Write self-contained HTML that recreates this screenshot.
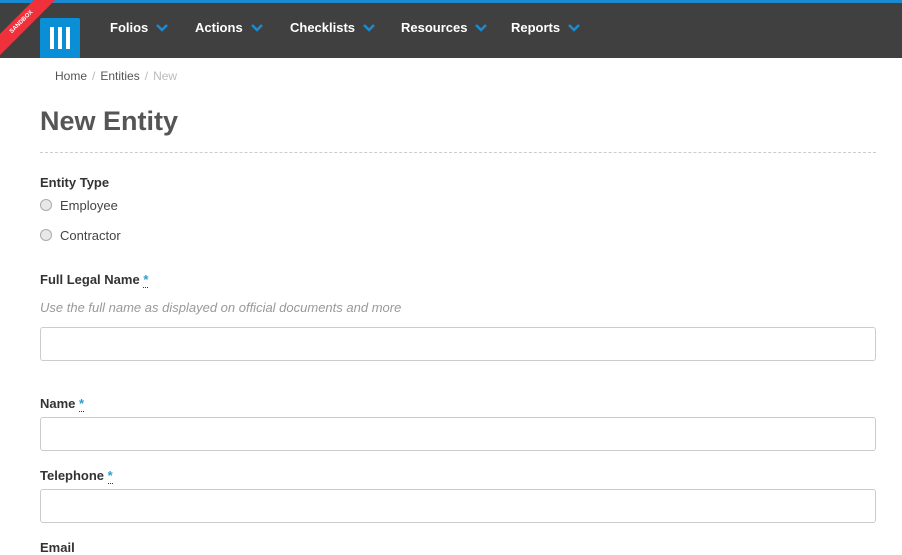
<!DOCTYPE html>
<html><head><style>
body{margin:0;width:902px;height:548px;overflow:hidden;background:#fff;font-family:"Liberation Sans",sans-serif;color:#333;position:relative}
.top{position:absolute;left:0;top:0;width:902px;height:3px;background:#1a8bd0}
.nav{position:absolute;left:0;top:3px;width:902px;height:55px;background:#404040}
.logo{position:absolute;left:40px;top:18px;width:40px;height:40px;background:#0a8fd6;border-radius:2px 2px 0 0}
.logo i{position:absolute;top:9px;width:4px;height:22px;background:#fff}
.menu{position:absolute;top:20px;font-size:13px;font-weight:bold;color:#fff;white-space:nowrap}
.menu svg{display:inline-block;margin-left:8px;vertical-align:0}
.rib{position:absolute;left:-38px;top:15px;width:120px;height:15px;background:#f0303a;transform:rotate(-45deg);color:#fff;font-size:6px;font-weight:bold;text-align:center;line-height:15px}
.bc{position:absolute;top:69px;left:55px;font-size:12px;color:#555}
.bc span{color:#bbb;margin:0 5px}
h1{position:absolute;left:40px;top:106px;margin:0;font-size:27px;color:#555;font-weight:bold}
.hr{position:absolute;left:40px;top:152px;width:836px;border-top:1px dashed #ccc}
.lbl{position:absolute;left:40px;font-size:13px;font-weight:bold;color:#333}
.star{color:#2a9fd6;border-bottom:1px dotted #333}
.rad{position:absolute;left:40px;font-size:13px;color:#444}
.rad b{display:inline-block;width:10px;height:10px;border:1px solid #aaa;border-radius:50%;background:#e8e8e8;vertical-align:-1px;margin-right:8px}
.help{position:absolute;left:40px;top:300px;font-size:13px;font-style:italic;color:#999}
.in{position:absolute;left:40px;width:834px;height:32px;border:1px solid #ccc;border-radius:3px}
</style></head><body>
<div class="top"></div><div class="nav"></div>
<div class="rib">SANDBOX</div>
<div class="logo"><i style="left:10px"></i><i style="left:18px"></i><i style="left:26px"></i></div>
<div class="menu" style="left:110px">Folios<svg width="12" height="8"><path d="M1 1l5 5 5-5" stroke="#1a8bd0" stroke-width="2.5" fill="none"/></svg></div>
<div class="menu" style="left:195px">Actions<svg width="12" height="8"><path d="M1 1l5 5 5-5" stroke="#1a8bd0" stroke-width="2.5" fill="none"/></svg></div>
<div class="menu" style="left:290px">Checklists<svg width="12" height="8"><path d="M1 1l5 5 5-5" stroke="#1a8bd0" stroke-width="2.5" fill="none"/></svg></div>
<div class="menu" style="left:401px">Resources<svg width="12" height="8"><path d="M1 1l5 5 5-5" stroke="#1a8bd0" stroke-width="2.5" fill="none"/></svg></div>
<div class="menu" style="left:511px">Reports<svg width="12" height="8"><path d="M1 1l5 5 5-5" stroke="#1a8bd0" stroke-width="2.5" fill="none"/></svg></div>
<div class="bc">Home<span>/</span>Entities<span>/</span><em style="font-style:normal;color:#bbb">New</em></div>
<h1>New Entity</h1>
<div class="hr"></div>
<div class="lbl" style="top:175px">Entity Type</div>
<div class="rad" style="top:198px"><b></b>Employee</div>
<div class="rad" style="top:228px"><b></b>Contractor</div>
<div class="lbl" style="top:272px">Full Legal Name <span class="star">*</span></div>
<div class="help">Use the full name as displayed on official documents and more</div>
<div class="in" style="top:327px"></div>
<div class="lbl" style="top:396px">Name <span class="star">*</span></div>
<div class="in" style="top:417px"></div>
<div class="lbl" style="top:468px">Telephone <span class="star">*</span></div>
<div class="in" style="top:489px"></div>
<div class="lbl" style="top:540px">Email</div>
</body></html>
